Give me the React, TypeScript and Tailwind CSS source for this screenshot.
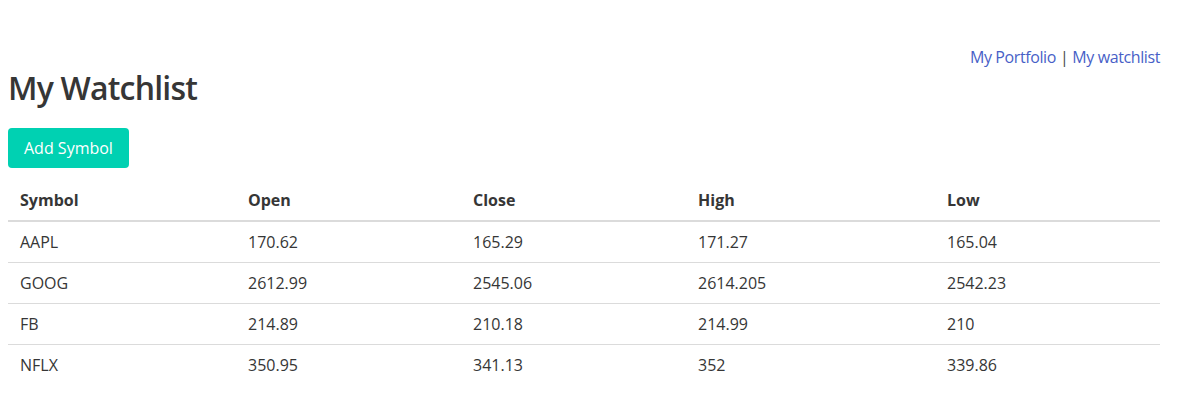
import React from "react";

const rows = [
  { symbol: "AAPL", open: "170.62", close: "165.29", high: "171.27", low: "165.04" },
  { symbol: "GOOG", open: "2612.99", close: "2545.06", high: "2614.205", low: "2542.23" },
  { symbol: "FB", open: "214.89", close: "210.18", high: "214.99", low: "210" },
  { symbol: "NFLX", open: "350.95", close: "341.13", high: "352", low: "339.86" },
];

export default function App() {
  return (
    <div className="min-h-[417px] bg-white font-['Open_Sans',sans-serif] text-[#4a4a4a] text-base">
      <div className="w-[1152px] ml-2 pt-[45px]">
        <div className="flex justify-end leading-6 tracking-[-0.4px]">
          <a href="#" className="text-[#485fc7]">My Portfolio</a>
          <span className="mx-[4px]">|</span>
          <a href="#" className="text-[#485fc7]">My watchlist</a>
        </div>

        <h1 className="text-[32px] leading-[36px] font-semibold text-[#363636] mt-[1px] tracking-[-0.8px]">
          My Watchlist
        </h1>

        <button className="mt-[22px] h-10 px-4 rounded bg-[#00d1b2] text-white leading-6">
          Add Symbol
        </button>

        <table className="mt-3 w-full table-fixed border-collapse text-[#363636] leading-6">
          <colgroup>
            <col className="w-[228px]" />
            <col className="w-[225px]" />
            <col className="w-[225px]" />
            <col className="w-[249px]" />
            <col className="w-[225px]" />
          </colgroup>
          <thead>
            <tr className="border-b-2 border-[#dbdbdb]">
              {["Symbol", "Open", "Close", "High", "Low"].map((h) => (
                <th key={h} className="text-left font-bold px-3 py-2">
                  {h}
                </th>
              ))}
            </tr>
          </thead>
          <tbody>
            {rows.map((r, idx) => (
              <tr
                key={r.symbol}
                className={idx < rows.length - 1 ? "border-b border-[#dbdbdb]" : ""}
              >
                <td className="px-3 py-2">{r.symbol}</td>
                <td className="px-3 py-2">{r.open}</td>
                <td className="px-3 py-2">{r.close}</td>
                <td className="px-3 py-2">{r.high}</td>
                <td className="px-3 py-2">{r.low}</td>
              </tr>
            ))}
          </tbody>
        </table>
      </div>
    </div>
  );
}
